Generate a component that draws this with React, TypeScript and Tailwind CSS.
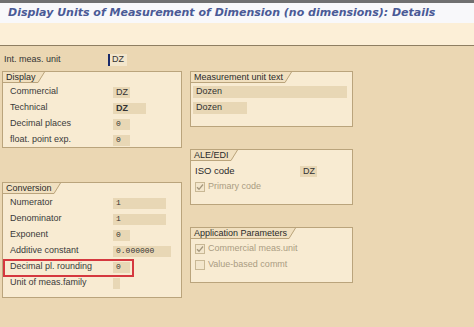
import React from "react";

const BORDER = "border-[#baa47c]";

function Tab({ title }: { title: string }) {
  return (
    <div className="flex h-[11px] items-stretch">
      <div className="flex items-center border-b border-[#baa47c] bg-[#f1e0c0] pl-[3px] pr-[2px] text-[9px] leading-none text-[#2a2a2a]">
        {title}
      </div>
      <svg width="7" height="11" className="block shrink-0">
        <polygon points="0,0 7,0 0,11" fill="#f1e0c0" />
        <line x1="0" y1="10.5" x2="6.5" y2="0" stroke="#baa47c" strokeWidth="1" />
      </svg>
    </div>
  );
}

function Group({
  title,
  className,
  children,
}: {
  title: string;
  className: string;
  children?: React.ReactNode;
}) {
  return (
    <div className={`flex flex-col border ${BORDER} bg-[#f8ebd2] ${className}`}>
      <Tab title={title} />
      {children}
    </div>
  );
}

function Field({
  value,
  w,
  bold,
  sans,
}: {
  value?: string;
  w: string;
  bold?: boolean;
  sans?: boolean;
}) {
  return (
    <div
      className={`flex h-[11px] items-center bg-[#e8d7b5] pl-[3px] leading-none text-[#333] ${w} ${
        bold ? "font-bold" : ""
      } ${sans ? "text-[9px]" : "text-[8px]"}`}
      style={{
        fontFamily: sans
          ? "'Liberation Sans', Arial, sans-serif"
          : "'Liberation Mono', 'Courier New', monospace",
      }}
    >
      {value}
    </div>
  );
}

function LRow({
  label,
  children,
}: {
  label: string;
  children?: React.ReactNode;
}) {
  return (
    <div className="flex h-[16px] items-center">
      <div className="w-[110px] pl-[7px] text-[9px] text-[#3a3a3a]">{label}</div>
      {children}
    </div>
  );
}

function Check({ checked, label }: { checked?: boolean; label: string }) {
  return (
    <div className="flex items-center gap-[3px] pl-[4px]">
      <div className="flex h-[10px] w-[10px] items-center justify-center border border-[#c9b895] bg-[#f3e6cc]">
        {checked && (
          <svg width="8" height="8" viewBox="0 0 8 8">
            <path d="M1 4.2 L3 6.3 L7 1.5" fill="none" stroke="#a4967c" strokeWidth="1.3" />
          </svg>
        )}
      </div>
      <span className="text-[9px] text-[#aa9c82]">{label}</span>
    </div>
  );
}

export default function App() {
  return (
    <div
      className="relative h-[327px] w-[474px] overflow-hidden bg-[#ebd7b3]"
      style={{ fontFamily: "'Liberation Sans', Arial, sans-serif" }}
    >
      <div className="h-[3px] bg-[#707070]" />
      <div className="flex h-[20px] items-center bg-[#f8f8fa] pl-[8px]">
        <span
          className="text-[11px] font-bold italic text-[#4a5a96]"
          style={{ fontFamily: "'DejaVu Sans', Verdana, sans-serif" }}
        >
          Display Units of Measurement of Dimension (no dimensions): Details
        </span>
      </div>
      <div className="h-[23px] border-b border-[#8e7e62] bg-[#fcefd7]" />

      <div className="pl-[2px] pt-[8px]">
        <div className="flex h-[12px] items-center">
          <div className="w-[106px] pl-[2px] text-[9px] text-[#333]">Int. meas. unit</div>
          <div className="flex h-[12px] w-[19px] items-center border-l-2 border-[#1a2a6a] bg-[#f3e6cc] pl-[2px] text-[9px] text-[#333]">
            DZ
          </div>
        </div>

        <div className="mt-[5px] flex gap-[8px]">
          <div className="flex w-[180px] flex-col gap-[34px]">
            <Group title="Display" className="h-[77px]">
              <div className="pt-[1px]">
                <LRow label="Commercial"><Field value="DZ" w="w-[17px]" sans /></LRow>
                <LRow label="Technical"><Field value="DZ" w="w-[33px]" bold sans /></LRow>
                <LRow label="Decimal places"><Field value="0" w="w-[17px]" /></LRow>
                <LRow label="float. point exp."><Field value="0" w="w-[17px]" /></LRow>
              </div>
            </Group>
            <Group title="Conversion" className="h-[116px]">
              <div className="pt-[1px]">
                <LRow label="Numerator"><Field value="1" w="w-[53px]" /></LRow>
                <LRow label="Denominator"><Field value="1" w="w-[53px]" /></LRow>
                <LRow label="Exponent"><Field value="0" w="w-[17px]" /></LRow>
                <LRow label="Additive constant"><Field value="0.000000" w="w-[58px]" /></LRow>
                <div className="relative">
                  <LRow label="Decimal pl. rounding"><Field value="0" w="w-[17px]" /></LRow>
                  <div className="absolute left-0 top-0 h-[18px] w-[131px] border-2 border-[#d5383f]" />
                </div>
                <LRow label="Unit of meas.family"><Field w="w-[7px]" /></LRow>
              </div>
            </Group>
          </div>

          <div className="flex w-[163px] flex-col gap-[22px]">
            <Group title="Measurement unit text" className="h-[56px]">
              <div className="flex flex-col gap-[4px] pl-[2px] pt-[3px]">
                <div className="flex h-[12px] w-[154px] items-center bg-[#e8d7b5] pl-[3px] text-[9px] text-[#333]">Dozen</div>
                <div className="flex h-[12px] w-[54px] items-center bg-[#e8d7b5] pl-[3px] text-[9px] text-[#333]">Dozen</div>
              </div>
            </Group>
            <Group title="ALE/EDI" className="h-[56px]">
              <div className="pt-[3px]">
                <div className="flex h-[15px] items-center">
                  <div className="w-[109px] pl-[4px] text-[9.5px] text-[#2a2a2a]">ISO code</div>
                  <Field value="DZ" w="w-[17px]" sans />
                </div>
                <div className="flex h-[15px] items-center">
                  <Check checked label="Primary code" />
                </div>
              </div>
            </Group>
            <Group title="Application Parameters" className="h-[56px]">
              <div className="pt-[2px]">
                <div className="flex h-[16px] items-center">
                  <Check checked label="Commercial meas.unit" />
                </div>
                <div className="flex h-[16px] items-center">
                  <Check label="Value-based commt" />
                </div>
              </div>
            </Group>
          </div>
        </div>
      </div>
    </div>
  );
}
